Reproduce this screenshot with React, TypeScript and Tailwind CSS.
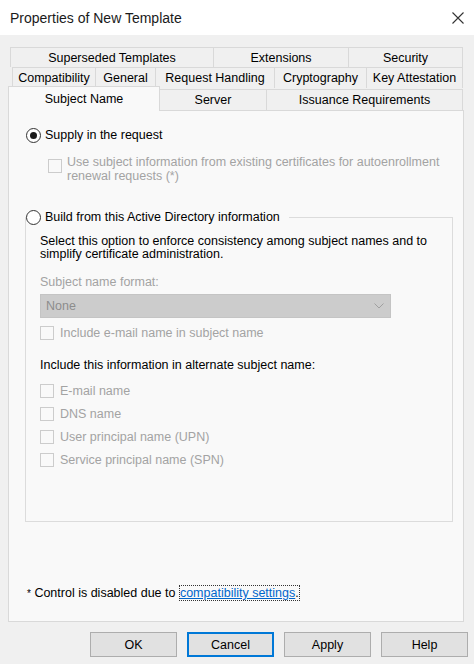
import React from "react";

const Radio = ({ checked }: { checked?: boolean }) => (
  <span className="flex h-[15px] w-[15px] shrink-0 items-center justify-center rounded-full border border-[#333333] bg-white">
    {checked && <span className="h-[7px] w-[7px] rounded-full bg-[#1a1a1a]" />}
  </span>
);

const Box = () => (
  <span className="block h-[14px] w-[14px] shrink-0 border border-[#cccccc] bg-[#f9f9f9]" />
);

const Check = ({ label }: { label: string }) => (
  <div className="flex h-[14px] items-center gap-[6px] text-[#a3a3a3]">
    <Box />
    <span>{label}</span>
  </div>
);

const Tab = ({ label, w, last }: { label: string; w: number; last?: boolean }) => (
  <div
    className={`flex h-full items-center justify-center border-t border-l border-[#d9d9d9] bg-[#f0f0f0] ${last ? "border-r" : ""}`}
    style={{ width: w }}
  >
    {label}
  </div>
);

const App = () => {
  return (
    <div className="flex h-[664px] w-[474px] flex-col overflow-hidden bg-[#f0f0f0] text-[12.5px] leading-[14px] text-black [font-family:'Liberation_Sans',Arial,sans-serif]">
      {/* title bar */}
      <div className="flex h-[35px] shrink-0 items-center justify-between bg-white pl-[10px] pr-[10px]">
        <span className="text-[14px] text-[#1a1a1a]">Properties of New Template</span>
        <svg width="12" height="12" viewBox="0 0 12 12">
          <path d="M0.5 0.5L11.5 11.5M11.5 0.5L0.5 11.5" stroke="#333" strokeWidth="1.1" />
        </svg>
      </div>

      <div className="ml-[8px] mt-[12px] w-[456px]">
        {/* tab rows */}
        <div className="flex h-[20px] pl-[2px]">
          <Tab label="Superseded Templates" w={203} />
          <Tab label="Extensions" w={135} />
          <Tab label="Security" w={115} last />
        </div>
        <div className="flex h-[21px] pl-[4px]">
          <Tab label="Compatibility" w={83} />
          <Tab label="General" w={60} />
          <Tab label="Request Handling" w={119} />
          <Tab label="Cryptography" w={92} />
          <Tab label="Key Attestation" w={97} last />
        </div>
        <div className="flex h-[22px] items-end">
          <div className="relative z-10 -mb-px flex h-[25px] w-[152px] items-center justify-center border-x border-t border-[#d9d9d9] bg-[#f9f9f9]">
            Subject Name
          </div>
          <div className="flex h-[21px] w-[106px] items-center justify-center border-t border-[#d9d9d9] bg-[#f0f0f0]">
            Server
          </div>
          <div className="flex h-[21px] w-[197px] items-center justify-center border-x border-t border-[#d9d9d9] bg-[#f0f0f0]">
            Issuance Requirements
          </div>
        </div>

        {/* panel */}
        <div className="h-[512px] border border-[#d9d9d9] bg-[#f9f9f9]">
          <div className="ml-[17px] mt-[16px] flex h-[16px] items-center gap-[4px]">
            <Radio checked />
            <span>Supply in the request</span>
          </div>
          <div className="ml-[39px] mt-[12px] flex items-start gap-[5px] text-[#a3a3a3]">
            <span className="mt-[4px]">
              <Box />
            </span>
            <span className="w-[390px]">
              Use subject information from existing certificates for autoenrollment renewal requests (*)
            </span>
          </div>

          <fieldset className="ml-[16px] mt-[26px] h-[313px] w-[428px] border border-[#dcdcdc]">
            <legend className="flex h-[16px] items-center gap-[4px] pr-[9px]">
              <Radio />
              <span>Build from this Active Directory information</span>
            </legend>
            <div className="pl-[14px]">
              <p className="mt-[10px] leading-[13px]">
                Select this option to enforce consistency among subject names and to simplify certificate
                administration.
              </p>
              <p className="mt-[14px] text-[#a3a3a3]">Subject name format:</p>
              <div className="mt-[5px] flex h-[24px] w-[351px] items-center justify-between border border-[#c4c4c4] bg-[#cccccc] pl-[5px] pr-[6px] text-[#8c8c8c]">
                <span>None</span>
                <svg width="10" height="6" viewBox="0 0 10 6">
                  <path d="M0.5 0.5L5 5L9.5 0.5" fill="none" stroke="#a0a0a0" strokeWidth="1" />
                </svg>
              </div>
              <div className="mt-[8px]">
                <Check label="Include e-mail name in subject name" />
              </div>
              <p className="mt-[18px]">Include this information in alternate subject name:</p>
              <div className="mt-[12px] flex flex-col gap-[9px]">
                <Check label="E-mail name" />
                <Check label="DNS name" />
                <Check label="User principal name (UPN)" />
                <Check label="Service principal name (SPN)" />
              </div>
            </div>
          </fieldset>

          <p className="ml-[18px] mt-[63px] leading-[16px]">
            <span className="text-[10px]">*</span> Control is disabled due to{" "}
            <span className="border border-dotted border-[#333]">
              <span className="text-[#0066cc] underline">compatibility settings</span>.
            </span>
          </p>
        </div>
      </div>

      {/* buttons */}
      <div className="ml-[90px] mt-[10px] flex gap-[10px]">
        {["OK", "Cancel", "Apply", "Help"].map((b) => (
          <button
            key={b}
            className={`h-[25px] w-[87px] bg-[#e1e1e1] ${b === "Cancel" ? "border-2 border-[#0078d7]" : "border border-[#adadad]"}`}
          >
            {b}
          </button>
        ))}
      </div>
    </div>
  );
};

export default App;
